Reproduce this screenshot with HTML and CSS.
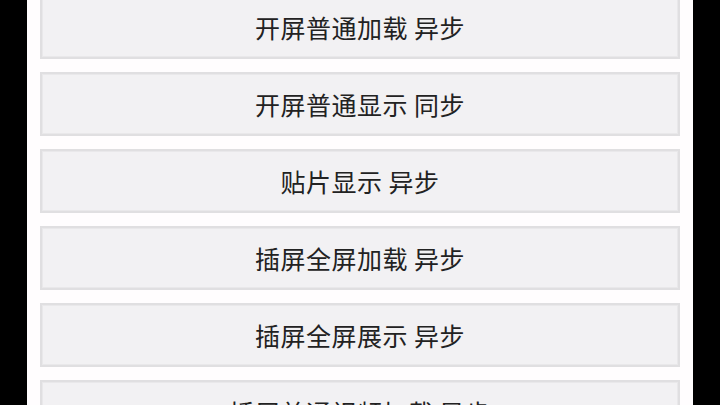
FILE: index.html
```html
<!DOCTYPE html>
<html lang="zh">
<head>
<meta charset="utf-8">
<link rel="stylesheet" href="styles.css">
</head>
<body>
<div class="screen">
  <div class="list">
    <div class="btn">开屏普通加载 异步</div>
    <div class="btn">开屏普通显示 同步</div>
    <div class="btn">贴片显示 异步</div>
    <div class="btn">插屏全屏加载 异步</div>
    <div class="btn">插屏全屏展示 异步</div>
    <div class="btn">插屏普通视频加载 异步</div>
  </div>
</div>
</body>
</html>
```
FILE: styles.css
```css
html, body {
  margin: 0;
  padding: 0;
  background: #000;
  height: 405px;
  overflow: hidden;
}
.screen {
  width: 666px;
  height: 405px;
  margin: 0 auto;
  background: #fffdfe;
  overflow: hidden;
  padding: 0 13px;
  box-sizing: border-box;
}
.list {
  display: flex;
  flex-direction: column;
  gap: 13px;
  margin-top: -5px;
}
.btn {
  height: 64px;
  flex: none;
  box-sizing: border-box;
  background: #f2f1f3;
  border: 2px solid #e0dfe1;
  box-shadow: inset 0 0 0 1px #e9e8ea;
  display: flex;
  align-items: center;
  justify-content: center;
  font-family: "Noto Sans CJK SC", "Noto Sans", sans-serif;
  font-size: 25px;
  letter-spacing: 0.5px;
  color: #222;
}
```
